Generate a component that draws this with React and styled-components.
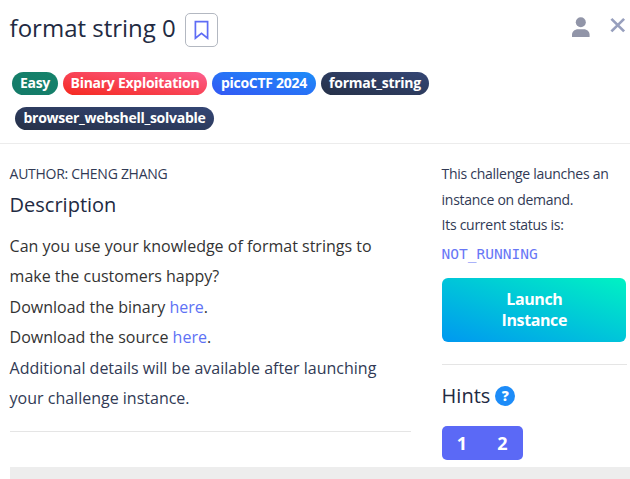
import React from 'react'
import styled, { createGlobalStyle } from 'styled-components'

const tags = [
    { name: 'Easy', from: '#147a68', to: '#15836b', width: 46 },
    { name: 'Binary Exploitation', from: '#f5291f', to: '#fc5f8f', width: 144 },
    { name: 'picoCTF 2024', from: '#3358f4', to: '#1d8cf8', width: 104 },
    { name: 'format_string', from: '#263148', to: '#344675', width: 108 },
    { name: 'browser_webshell_solvable', from: '#263148', to: '#344675', width: 199 },
]

function Header() {
    return (
        <HeaderWrap>
            <TitleRow>
                <Title>format string 0</Title>
                <BookmarkButton aria-label="Bookmark">
                    <svg width="15" height="20" viewBox="0 0 15 20" fill="none">
                        <path d="M1.4 1.7H13.6V18.2L7.5 13.4L1.4 18.2Z" stroke="#5e6cf5" strokeWidth="1.7" />
                    </svg>
                </BookmarkButton>
                <Actions>
                    <svg width="18" height="21" viewBox="0 0 18 21" fill="#9195a8">
                        <circle cx="8.8" cy="5.2" r="5" />
                        <path d="M0 20V17.8C0 14.3 3 12.2 6 12.2H11.8C15 12.2 17.6 14.5 17.6 17.8V20Z" />
                    </svg>
                    <svg width="16" height="16" viewBox="0 0 16 16">
                        <path d="M1.4 1.9L14.1 14.4M14.1 1.9L1.4 14.4" stroke="#979fbd" strokeWidth="2.7" />
                    </svg>
                </Actions>
            </TitleRow>
            <Tags>
                {tags.map((tag, i) => (
                    <Tag key={tag.name} $from={tag.from} $to={tag.to} $width={tag.width} $indent={i === 4}>
                        {tag.name}
                    </Tag>
                ))}
            </Tags>
        </HeaderWrap>
    )
}

function Details() {
    return (
        <DetailsColumn>
            <Small>AUTHOR: CHENG ZHANG</Small>
            <Heading>Description</Heading>
            <Description>
                Can you use your knowledge of format strings to<br />
                make the customers happy?<br />
                Download the binary <Link href="#binary">here</Link>.<br />
                Download the source <Link href="#source">here</Link>.
            </Description>
            <Description $tint>
                Additional details will be available after launching<br />
                your challenge instance.
            </Description>
            <Divider $gap={17.5} />
        </DetailsColumn>
    )
}

function Instance() {
    return (
        <SideColumn>
            <Small>
                This challenge launches an<br />
                instance on demand.<br />
                Its current status is:
            </Small>
            <Status>NOT_RUNNING</Status>
            <LaunchButton>Launch<br />Instance</LaunchButton>
            <Divider $gap={22} />
            <HintsTitle>
                Hints <Help>?</Help>
            </HintsTitle>
            <HintGroup>
                <Hint>1</Hint>
                <Hint>2</Hint>
            </HintGroup>
        </SideColumn>
    )
}

function App() {
    return (
        <Modal>
            <GlobalStyle />
            <Header />
            <Body>
                <Details />
                <Instance />
            </Body>
            <Footer />
        </Modal>
    )
}

export default App

const GlobalStyle = createGlobalStyle`
    * {
        box-sizing: border-box;
    }
    body {
        margin: 0;
        background: #fff;
        color: #313a55;
        font-family: 'Open Sans', 'Noto Sans', sans-serif;
    }
    button {
        font-family: inherit;
    }
`;

const Modal = styled.div`
    height: 479px;
    overflow: hidden;
    display: flex;
    flex-direction: column;
`;

//Header
const HeaderWrap = styled.header`
    height: 144px;
    flex: none;
    padding: 13px 4px 0 9.6px;
    border-bottom: 1px solid #ececec;
`;

const TitleRow = styled.div`
    display: flex;
    height: 35px;
`;

const Title = styled.h1`
    margin: 0;
    width: 175.4px;
    font-size: 24px;
    font-weight: 400;
    line-height: 30px;
    color: #222a42;
    white-space: nowrap;
`;

const BookmarkButton = styled.button`
    display: flex;
    align-items: center;
    justify-content: center;
    width: 33px;
    height: 34px;
    padding: 0;
    border: 1px solid #b3b8c1;
    border-radius: 5px;
    background: #fff;
`;

const Actions = styled.div`
    display: flex;
    align-items: flex-start;
    gap: 20px;
    margin-left: auto;
    padding-top: 4px;
`;

const Tags = styled.div`
    display: flex;
    flex-wrap: wrap;
    gap: 12px 5px;
    padding: 24px 150px 0 2.4px;
`;

const Tag = styled.span`
    width: ${p => p.$width}px;
    height: 23px;
    margin-left: ${p => (p.$indent ? 3 : 0)}px;
    border-radius: 12px;
    background: linear-gradient(to top right, ${p => p.$from}, ${p => p.$to});
    color: #fff;
    font-size: 14px;
    font-weight: 700;
    letter-spacing: -0.27px;
    line-height: 22px;
    text-align: center;
    white-space: nowrap;
`;

//Main columns
const Body = styled.main`
    display: grid;
    grid-template-columns: 401px 185px;
    column-gap: 31px;
    padding: 17.2px 0 0 9.6px;
    height: 323px;
    flex: none;
`;

const DetailsColumn = styled.section``;

const SideColumn = styled.section``;

const Small = styled.div`
    font-size: 14px;
    letter-spacing: -0.28px;
    line-height: 25.4px;
    white-space: nowrap;
`;

const Heading = styled.h2`
    margin: 4.5px 0 0;
    font-size: 20px;
    font-weight: 400;
    line-height: 28px;
    color: #222a42;
`;

const Description = styled.div`
    margin-top: ${p => (p.$tint ? 0 : 11.9)}px;
    font-size: 16px;
    line-height: 30.4px;
    white-space: nowrap;
    color: ${p => (p.$tint ? '#313a55' : '#333')};
`;

const Link = styled.a`
    color: #5e72f5;
    text-decoration: none;
`;

const Divider = styled.hr`
    margin: ${p => p.$gap}px 0 0;
    border: 0;
    border-top: 1px solid #e5e5e5;
`;

const Status = styled.code`
    display: block;
    margin-top: 4.6px;
    font-family: 'DejaVu Sans Mono', monospace;
    font-size: 14.5px;
    line-height: 24px;
    color: #6877f6;
`;

const LaunchButton = styled.button`
    display: block;
    width: 184.4px;
    height: 64px;
    margin-top: 11.9px;
    padding: 0 0 0 1px;
    border: 0;
    border-radius: 6px;
    background: linear-gradient(to top right, #0098f0, #00f2c3);
    color: #fff;
    font-size: 16px;
    font-weight: 700;
    letter-spacing: -0.4px;
    line-height: 21px;
`;

const HintsTitle = styled.h2`
    display: flex;
    align-items: center;
    gap: 5px;
    margin: 17px 0 0;
    font-size: 20px;
    font-weight: 400;
    line-height: 28px;
    color: #222a42;
`;

const Help = styled.span`
    width: 20px;
    height: 20px;
    border-radius: 50%;
    background: #1d8cf8;
    color: #fff;
    font-size: 14px;
    font-weight: 800;
    line-height: 20px;
    text-align: center;
`;

const HintGroup = styled.div`
    display: flex;
    width: 81px;
    height: 34px;
    margin-top: 16px;
    border-radius: 5px;
    overflow: hidden;
`;

const Hint = styled.button`
    flex: 1;
    padding: 0;
    border: 0;
    background: #5b69f6;
    color: #fff;
    font-size: 18px;
    font-weight: 700;
`;

const Footer = styled.footer`
    flex: 1;
    margin-left: 10px;
    background: #ededed;
`;
